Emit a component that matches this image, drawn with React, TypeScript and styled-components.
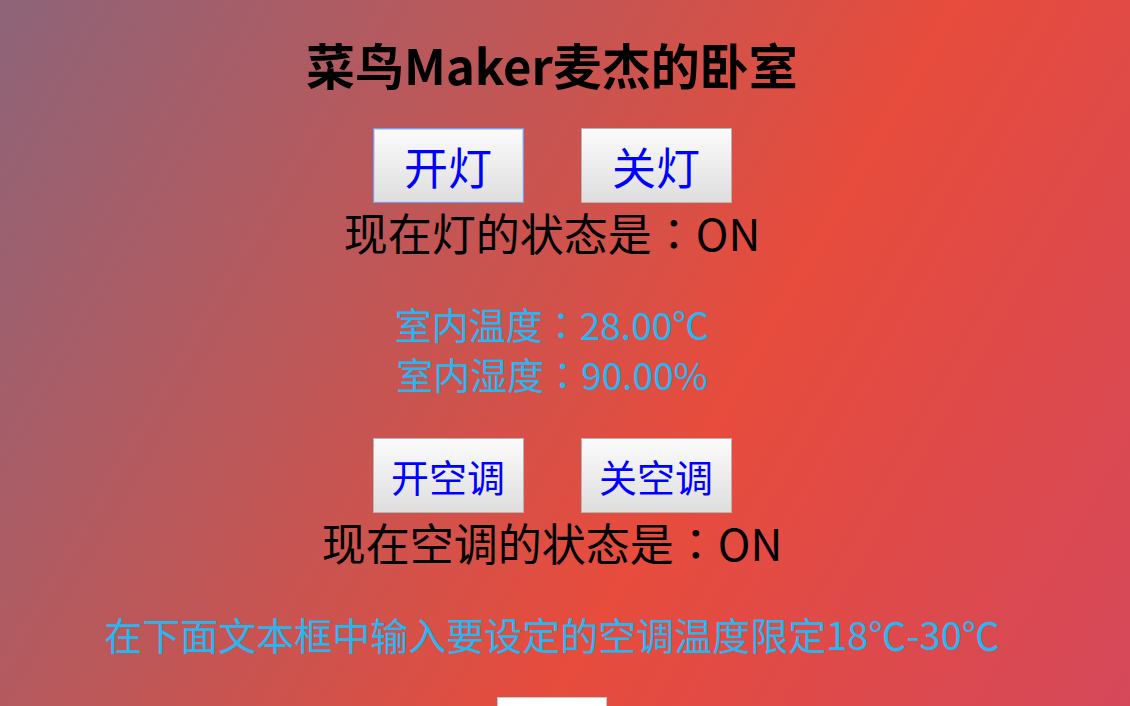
import React, { useState } from 'react';
import styled, { createGlobalStyle } from 'styled-components';

const GlobalStyle = createGlobalStyle`
  html, body {
    margin: 0;
    padding: 0;
  }
  body {
    font-family: "Noto Sans CJK SC", "Noto Sans", sans-serif;
    background: linear-gradient(120deg, #8d6479 0%, #e74c3c 62%, #d5485a 100%) fixed;
    min-height: 100vh;
  }
`;

const Page = styled.div`
  display: flex;
  flex-direction: column;
  align-items: center;
  padding: 34px 26px 0 0;
  text-align: center;
`;

const Title = styled.h1`
  margin: 0;
  font-size: 49px;
  line-height: 60px;
  font-weight: 700;
  color: #000;
`;

const ButtonRow = styled.div<{ $top: number }>`
  display: flex;
  gap: 57px;
  margin-top: ${(p) => p.$top}px;
`;

const Button = styled.button<{ $size: number; $focused?: boolean }>`
  width: 151px;
  height: 75px;
  padding: 0;
  font-family: inherit;
  font-size: ${(p) => p.$size}px;
  line-height: 1;
  color: #0000ff;
  background: linear-gradient(#fbfbfb, #dedede);
  border: 1px solid ${(p) => (p.$focused ? '#7b9ce6' : '#b4b4b4')};
  box-shadow: ${(p) => (p.$focused ? 'inset 0 0 0 1px #c9d6f2' : 'none')};
  border-radius: 0;
  cursor: pointer;
`;

const Status = styled.div`
  margin-top: 4px;
  font-size: 44px;
  line-height: 50px;
  color: #000;
`;

const Info = styled.div<{ $top: number; $size: number }>`
  margin-top: ${(p) => p.$top}px;
  font-size: ${(p) => p.$size}px;
  line-height: 50px;
  color: #28b6f2;
`;

// centred full-width colon, as in the original font
const Colon = styled.span`
  font-family: "Noto Sans CJK TC", sans-serif;
`;

const TempInput = styled.input`
  margin-top: 38px;
  width: 110px;
  height: 40px;
  box-sizing: border-box;
  border: 1px solid #c8c8c8;
  background: #fff;
  font-family: inherit;
  font-size: 24px;
`;

const App: React.FC = () => {
  const [light, setLight] = useState('ON');
  const [ac, setAc] = useState('ON');
  const [limit, setLimit] = useState('');

  return (
    <>
      <GlobalStyle />
      <Page>
        <Title>菜鸟Maker麦杰的卧室</Title>

        <ButtonRow $top={34}>
          <Button $size={44} $focused onClick={() => setLight('ON')}>开灯</Button>
          <Button $size={44} onClick={() => setLight('OFF')}>关灯</Button>
        </ButtonRow>
        <Status>现在灯的状态是<Colon>：</Colon>{light}</Status>

        <Info $top={42} $size={37}>
          室内温度<Colon>：</Colon>28.00℃
          <br />
          室内湿度<Colon>：</Colon>90.00%
        </Info>

        <ButtonRow $top={39}>
          <Button $size={38} onClick={() => setAc('ON')}>开空调</Button>
          <Button $size={38} onClick={() => setAc('OFF')}>关空调</Button>
        </ButtonRow>
        <Status>现在空调的状态是<Colon>：</Colon>{ac}</Status>

        <Info $top={42} $size={38}>在下面文本框中输入要设定的空调温度限定18℃-30℃</Info>

        <TempInput value={limit} onChange={(e) => setLimit(e.target.value)} />
      </Page>
    </>
  );
};

export default App;
